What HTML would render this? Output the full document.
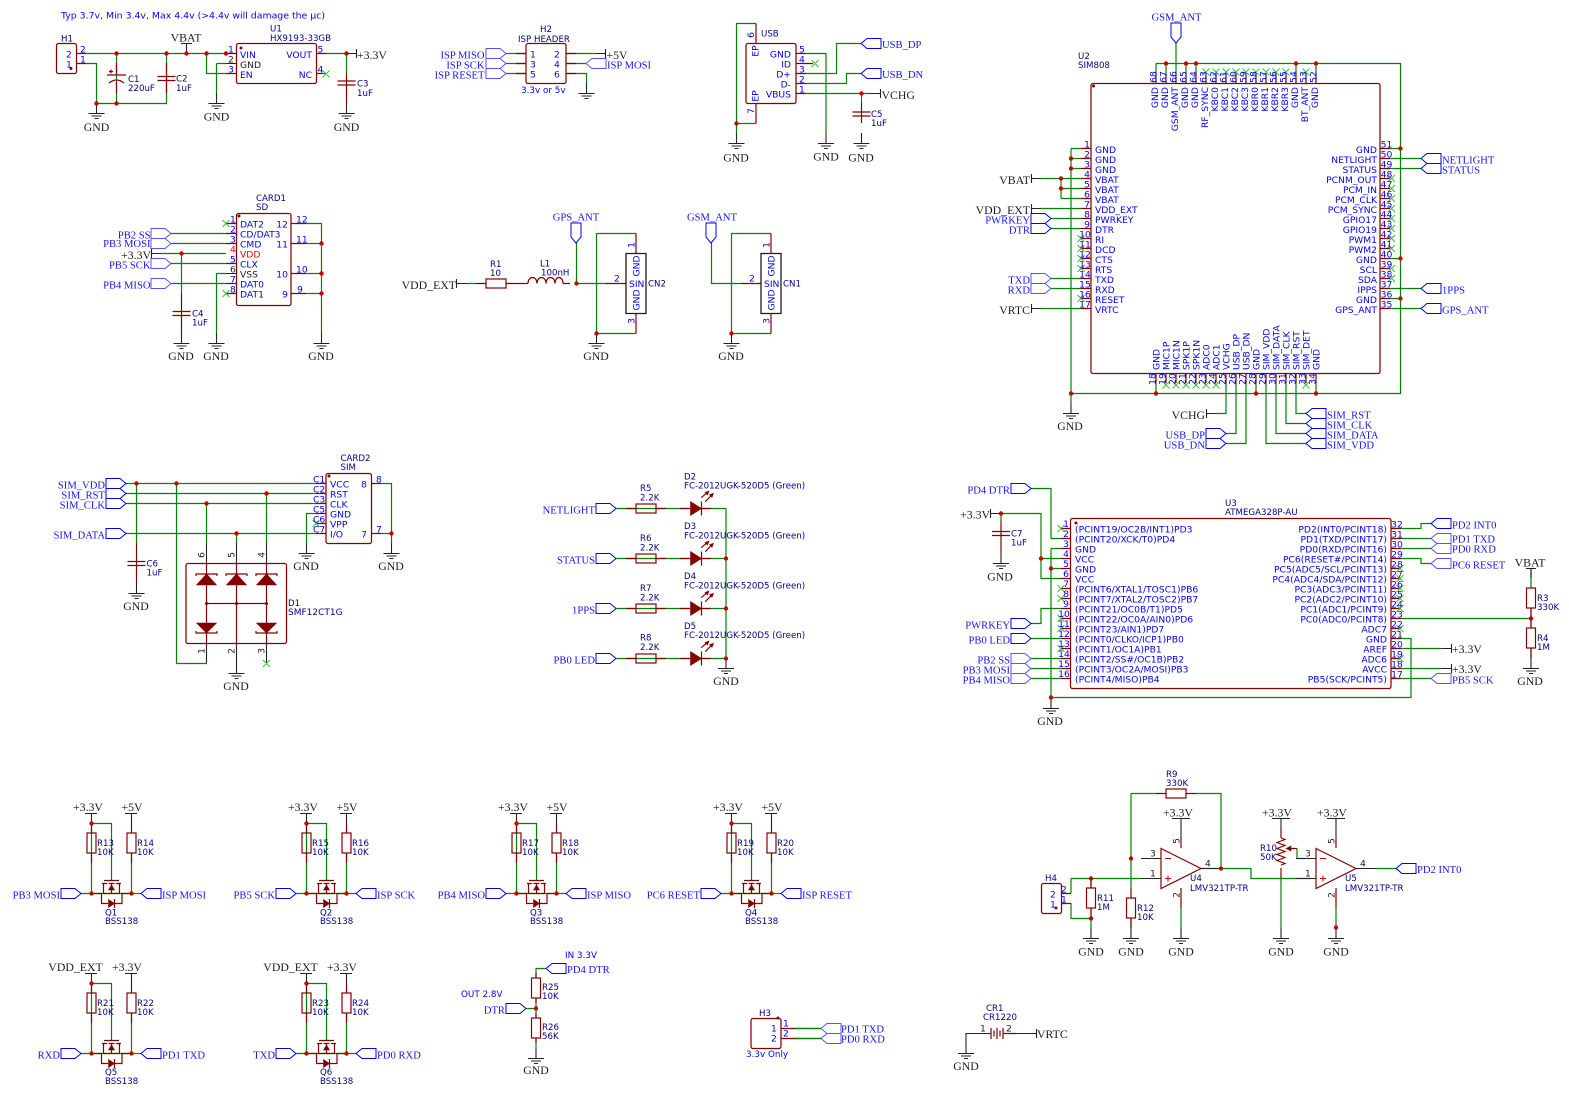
<!DOCTYPE html>
<html><head><meta charset="utf-8"><title>Schematic</title>
<style>
html,body{margin:0;padding:0;background:#fff;width:1569px;height:1097px;overflow:hidden}
svg{position:absolute;left:0;top:0}
text{font-family:"DejaVu Sans","Liberation Sans",sans-serif;font-size:9.2px;fill:#0000f0;dominant-baseline:central;stroke:none;transform:translateY(1.2px)}
.f{font-size:8.65px;fill:#000084}
.s text,text.s{font-family:"Liberation Serif",serif;font-size:11px}
.k text,text.k{fill:#1c1c1c}
.b text{fill:#1414f5}
.s.k text{font-size:11.8px}
.s.b text{font-size:10.6px}
.e{text-anchor:end}.e text{text-anchor:end}
.m{text-anchor:middle}.m text{text-anchor:middle}
path,rect,use{fill:none}
.w{stroke:#008400;stroke-width:1.2}
.p{stroke:#840000;stroke-width:1.2}
.g{stroke:#222;stroke-width:1.1}
.o{stroke:#840000;stroke-width:1.25}
.d{stroke:#c80000;stroke-width:4.4;stroke-linecap:round}
.dd{stroke:#840000;stroke-width:3;stroke-linecap:round}
.x{stroke:#30c030;stroke-width:.9}
.fl{fill:#fff;stroke:#0000f0;stroke-width:1}
.fp{fill:#fff3f3;stroke:#5a50ff;stroke-width:1}
.r{fill:#840000;stroke:#840000;stroke-width:.6}
.h{stroke:#1c1c1c;stroke-width:1.3;fill:#fff}
</style></head><body>
<svg width="1569" height="1097" viewBox="0 0 1569 1097" xmlns="http://www.w3.org/2000/svg">
<defs>
<g id="G"><path class="g" d="M0 0V10M-8 10.5H8M-5 13H5M-2 15.5H2"/></g>
<path id="R" d="M0 0L-6-5H-20V5H-6Z"/>
<path id="L" d="M0 0L6-5H20V5H6Z"/>
<path id="D" d="M0 0L-5-6V-20H5V-6Z"/>
<rect id="RH" class="p" x="0" y="-4.5" width="20" height="9"/>
<rect id="RV" class="p" x="-4.5" y="0" width="9" height="20"/>
<path id="C" class="p" d="M-9 0H9M-9 4H9"/>
<g id="LED"><path class="r" d="M0-7L11 0L0 7Z"/><path class="p" d="M11-7V7M10.7-10.8L17.7-16.8M14.7-6.8L22.3-14.5"/><path class="r" d="M18.5-17.5L14.5-16L17-13.5ZM23-15.2L19-13.7L21.5-11.2Z"/></g>
<g id="T"><path class="p" d="M0-20L40 0L0 20Z"/><path d="M4-10H10M4 10H10M7 7V13" stroke="#c80000"/></g>
<g id="S">
<path class="w" d="M81 893.5H141M91.5 823V893.5M131.5 853V893.5M91.5 823.5H111.5V880"/>
<path class="p" d="M91.5 823V833M91.5 853V863M131.5 823V833M131.5 853V863M91.5 893.5H101.5V903.5H108M114.5 903.5H122V893.5H131.5M103.5 893.5V883M119.5 893.5V883M111.5 893.5V883M103.5 893.5H119.5M104 880.5H119M102 883.5H107M108.5 883.5H114.5M116 883.5H121"/>
<path class="r" d="M108.5 899.5L114.5 903.5L108.5 907.5ZM111.5 885L108.5 890H114.5Z"/>
<path class="p" d="M114.5 899V908"/>
<path class="g" d="M91.5 813V823M131.5 813V823M85 813.5H97M125 813.5H137"/>
<use href="#RV" x="91.5" y="833"/><use href="#RV" x="131.5" y="833"/>
<use href="#R" class="fl" x="81" y="893.5"/><use href="#L" class="fl" x="141" y="893.5"/>
<path class="d" d="M91.5 823.5h0M91.5 893.5h0M131.5 893.5h0"/>
</g>
<g id="LU">
<path class="w" d="M616 508.5H690M701 508.5H726"/>
<path class="p" d="M626 508.5H636M656 508.5H666M680 508.5H690M701 508.5H711"/>
<use href="#RH" x="636" y="508.5"/>
<use href="#LED" x="690.5" y="508.5"/>
</g>
</defs>

<!-- wires -->
<path class="w" d="M86 53.5H226M86 63.5H96.5V103.5H166.5V53.5M116.5 53.5V103.5M206.5 53.5V73.5H226M216.5 63.5V93M216.5 63.5H226M326 53.5H346.5V73M326 73.5H323
M516 53.5H506M566 53.5H596M566 63.5H586M566 73.5H586.5V83M506 53.5H526M506 63.5H526M506 73.5H526
M736.5 23V133M736.5 23.5H756M736.5 123.5H756M806 53.5H826V133M806 73.5H836.5V43.5H861M806 83.5H846.5V73.5H861M806 93.5H870M861.5 93.5V103
M466 283.5H476M576 283.5H606M576.5 243V283.5M596.5 233V333M596.5 233.5H636M596.5 333.5H636
M711.5 243V283.5H741M731.5 233V333M731.5 233.5H771M731.5 333.5H771
M171 233.5H226M171 243.5H226M161 253.5H226M171 263.5H226M171 283.5H226M181.5 253.5V293M226 273.5H216.5V333M306 223.5H321.5V333M306 243.5H321.5M306 273.5H321.5M306 293.5H321.5
M126 483.5H316M126 493.5H316M126 503.5H316M126 533.5H316M136.5 483.5V543M176.5 483.5V663.5H206.5M206.5 503.5V543M236.5 533.5V543M266.5 493.5V543M316 513.5H306.5V543M381 483.5H391.5V543M381 533.5H391.5
M726 508.5V658
M1071 148.5V403M1071 148.5H1081M1071 158.5H1081M1071 168.5H1081M1041 178.5H1081M1061 178.5V198.5M1061 188.5H1081M1061 198.5H1081M1041 208.5H1081M1051 218.5H1081M1051 228.5H1081M1051 278.5H1081M1051 288.5H1081M1041 308.5H1081
M1156 63.5H1400.5V393.5H1071M1156 63.5V73M1166 63.5V73M1186 63.5V73M1196 63.5V73M1296 63.5V73M1316 63.5V73M1176 43V73
M1390 148.5H1400M1390 158.5H1421M1390 168.5H1421M1390 258.5H1400M1390 288.5H1421M1390 298.5H1400M1390 308.5H1421
M1156 383V393.5M1256 383V393.5M1316 383V393.5M1226 383V413.5H1216M1236 383V433.5H1226M1246 383V443.5H1226M1266 383V443.5H1306M1276 383V433.5H1306M1286 383V423.5H1306M1296 383V413.5H1306
M1031 488.5H1051V538.5H1061M1001 513.5H1041V578.5H1061M1041 558.5H1061M1051 548.5H1061M1051 548.5V698M1051 568.5H1061M1031 623.5H1041V608.5H1061M1031 638.5H1061M1031 658.5H1061M1031 668.5H1061M1031 678.5H1061M1051 697.5H1411V638.5H1401M1001 513.5V521
M1401 528.5H1421V523.5H1431M1401 538.5H1431M1401 548.5H1431M1401 558.5H1421V563.5H1431M1401 618.5H1531M1401 648.5H1441M1401 668.5H1441M1401 678.5H1431M1531 578V588M1531 608V628M1531 648V658
M1071 878.5H1141M1071 893V878.5M1071 903V918.5H1091M1091 878.5V888M1091 908V928M1131 793.5H1156M1196 793.5H1221V868.5M1131 793.5V888M1131 918V928M1201 868.5H1251V878.5H1311M1281 878V928M1181 908V928M1336 908V928M1376 868.5H1396M1297 848.5V858.5H1305"/>
<!-- pins -->
<path class="p" d="M76 53.5H86M76 63.5H86M226 53.5H236M226 73.5H236M316 53.5H326M316 73.5H323M116.5 63V75M116.5 82V93M166.5 63V93M346.5 73V103
M516 53.5H526M516 63.5H526M516 73.5H526M566 53.5H576M566 63.5H576M566 73.5H576
M756 23.5V43.5M756 103.5V123.5M796 53.5H806M796 63.5H813M796 73.5H806M796 83.5H806M796 93.5H806M861.5 103V123
M476 283.5H486M506 283.5H516M516 283.5H528M563 283.5H570M606 283.5H626M636 233.5V253M636 313.5V333.5
M741 283.5H761M771 233.5V253M771 313.5V333.5
M171 0M226 223.5H236M226 233.5H236M226 243.5H236M226 263.5H236M226 283.5H236M226 293.5H236M291 223.5H306M291 243.5H306M291 273.5H306M291 293.5H306M181.5 293V333
M316 483.5H326M316 493.5H326M316 503.5H326M316 513.5H326M316 523.5H326M316 533.5H326M371 483.5H381M371 533.5H381M136.5 543V583
M206.5 563V603.5M236.5 563V643M266.5 563V643M206.5 603.5V643M206.5 603.5H266.5
M1081 148.5h10m-10 10h10m-10 10h10m-10 10h10m-10 10h10m-10 10h10m-10 10h10m-10 10h10m-10 10h10m-10 10h10m-10 10h10m-10 10h10m-10 10h10m-10 10h10m-10 10h10m-10 10h10m-10 10h10
M1380 148.5h10m-10 10h10m-10 10h10m-10 10h10m-10 10h10m-10 10h10m-10 10h10m-10 10h10m-10 10h10m-10 10h10m-10 10h10m-10 10h10m-10 10h10m-10 10h10m-10 10h10m-10 10h10m-10 10h10
M1156 73v10m10-10v10m10-10v10m10-10v10m10-10v10m10-10v10m10-10v10m10-10v10m10-10v10m10-10v10m10-10v10m10-10v10m10-10v10m10-10v10m10-10v10m10-10v10m10-10v10
M1156 373v10m10-10v10m10-10v10m10-10v10m10-10v10m10-10v10m10-10v10m10-10v10m10-10v10m10-10v10m10-10v10m10-10v10m10-10v10m10-10v10m10-10v10m10-10v10m10-10v10
M1061 528.5h10m-10 10h10m-10 10h10m-10 10h10m-10 10h10m-10 10h10m-10 10h10m-10 10h10m-10 10h10m-10 10h10m-10 10h10m-10 10h10m-10 10h10m-10 10h10m-10 10h10m-10 10h10
M1391 528.5h10m-10 10h10m-10 10h10m-10 10h10m-10 10h10m-10 10h10m-10 10h10m-10 10h10m-10 10h10m-10 10h10m-10 10h10m-10 10h10m-10 10h10m-10 10h10m-10 10h10m-10 10h10
M1531 578V568M1531 608V618M1531 628V618M1531 648V658M1001 521V553
M1061 893.5H1071M1061 903.5H1071M1091 878.5V888M1091 908V918M1131 888V898M1131 918V928M1156 793.5H1166M1186 793.5H1196M1181 838V848M1181 888V908M1336 838V848M1336 888V908M1281 828V838M1281 868V878"/>
<!-- black stems -->
<path class="g" d="M186.5 53.5V43.5M181 43.5H192M226 63.5H236M346.5 53.5H356M356.5 49V58M596 53.5H606M605.5 49V58M881 93.5H870M880.5 89V98M456.5 283.5H466M456.5 279V288M486 283.5H476M506 283.5H516
M151 253.5H161M151.5 249V258M226 273.5H236M206.5 543V563M236.5 543V563M266.5 543V563M206.5 643V663.5M236.5 643V663M266.5 643V663M136.5 583V583
M1031 178.5H1041M1031.5 174V183M1031 208.5H1041M1031.5 204V213M1031 308.5H1041M1031.5 304V313M1216 413.5H1206M1206.5 409V418M991 513.5H1001M990.5 509V518M1451 648.5H1441M1451.5 644V653M1451 668.5H1441M1451.5 664V673M1531 568.5V578M1526 568.5H1536
M1141 858.5H1161M1141 878.5H1161M1201 868.5H1221M1181 818V838M1172 818.5H1190M1281 818V828M1272 818.5H1290M1336 818V838M1327 818.5H1345M1296 858.5H1316M1296 878.5H1316M1356 868.5H1376
M991 1033.5H966V1043M1036 1033.5H1016M1036.5 1029V1038"/>

<!-- bodies -->
<rect class="o" x="56.5" y="43.5" width="20" height="30" rx="2"/>
<rect class="o" x="236.5" y="43.5" width="80" height="40" rx="2"/>
<rect class="o" x="526" y="43.5" width="40" height="40" rx="2"/>
<rect class="o" x="746" y="43.5" width="50" height="60" rx="2"/>
<rect class="o" x="236.5" y="213.5" width="54.5" height="92" rx="2"/>
<rect class="o" x="326" y="473.5" width="45.5" height="70" rx="2"/>
<rect class="o" x="186" y="563.5" width="100.5" height="80" rx="2"/>
<rect class="o" x="1091" y="83.5" width="289" height="290" rx="2"/>
<rect class="o" x="1070.5" y="518.5" width="320.5" height="170" rx="2"/>
<rect class="o" x="1041.5" y="883.5" width="20" height="30" rx="2"/>
<rect class="o" x="751" y="1018.5" width="30" height="30" rx="2"/>
<path class="h" d="M626 253.5H646V313.5H626Z"/>
<path class="h" d="M761 253.5H781V313.5H761Z"/>

<!-- caps etc -->
<path class="p" d="M107 75H126M109 83Q116.5 77 124 83M109 71.5H113M111 69.5V73.5"/>
<use href="#C" x="166.5" y="76.5"/><use href="#C" x="346.5" y="81"/><use href="#C" x="861.5" y="112"/><use href="#C" x="181.5" y="311.5"/><use href="#C" x="136.5" y="561.5"/><use href="#C" x="1001" y="531.5"/>
<use href="#RH" x="486" y="283.5"/>
<path class="p" d="M528 283.5c0-8 9-8 9 0c0-8 9-8 9 0c0-8 9-8 9 0c0-8 8-8 8 0"/>
<use href="#RV" x="1531" y="588"/><use href="#RV" x="1531" y="628"/><use href="#RV" x="1091" y="888"/><use href="#RV" x="1131" y="898"/><use href="#RH" x="1166" y="793.5"/>
<use href="#T" x="1161" y="868.5"/><use href="#T" x="1316" y="868.5"/>
<path class="p" d="M1281 838l4 1.5-8 3 8 3-8 3 8 3-8 3 8 3-8 3 8 3-4 1.5M1297 848.5H1287"/>
<path class="r" d="M1286 848.5L1291 846V851Z"/>
<!-- battery -->
<path class="p" d="M991 1028V1039M994 1030.5V1036.5M997 1028V1039M1000 1030.5V1036.5M1003 1028V1039M1003 1033.5H1016"/>
<!-- D1 diodes -->
<path class="r" d="M206.5 574L196.5 585H216.5ZM236.5 574L226.5 585H246.5ZM266.5 574L256.5 585H276.5ZM206.5 633L196.5 623H216.5ZM266.5 633L256.5 623H276.5Z"/>
<path class="p" d="M196 576V574H217V576M226 576V574H247V576M256 576V574H277V576M196 631V633H217V631M256 631V633H277V631"/>
<path class="dd" d="M206.5 603.5h0M236.5 603.5h0M266.5 603.5h0M71 68.5h0M241 48h0M239 216h0M329 476h0M1093.5 86h0M1076 523h0M1056 908h0M778 1018h0"/>

<use href="#S"/><use href="#S" x="215"/><use href="#S" x="425"/><use href="#S" x="640"/><use href="#S" y="160"/><use href="#S" x="215" y="160"/>
<use href="#LU"/><use href="#LU" y="50"/><use href="#LU" y="100"/><use href="#LU" y="150"/>

<!-- flags -->
<g class="fp"><use class="fp" href="#R" x="506" y="53.5"/><use class="fp" href="#R" x="506" y="63.5"/><use class="fp" href="#R" x="506" y="73.5"/><use class="fp" href="#L" x="586" y="63.5"/>
<use class="fp" href="#R" x="171" y="233.5"/><use class="fp" href="#R" x="171" y="243.5"/><use class="fp" href="#R" x="171" y="263.5"/><use class="fp" href="#R" x="171" y="283.5"/>
<use class="fp" href="#R" x="1051" y="278.5"/><use class="fp" href="#R" x="1051" y="288.5"/>
<use class="fp" href="#R" x="1031" y="658.5"/><use class="fp" href="#R" x="1031" y="668.5"/><use class="fp" href="#R" x="1031" y="678.5"/>
<use class="fp" href="#L" x="1431" y="538.5"/><use class="fp" href="#L" x="1431" y="548.5"/><use class="fp" href="#L" x="1431" y="563.5"/><use class="fp" href="#L" x="1431" y="678.5"/>
<use class="fp" href="#L" x="821" y="1028.5"/><use class="fp" href="#L" x="821" y="1038.5"/></g>
<g class="fl">
<use class="fl" href="#L" x="861" y="43.5"/><use class="fl" href="#L" x="861" y="73.5"/><use class="fl" href="#D" x="576" y="243"/><use class="fl" href="#D" x="711" y="243"/><use class="fl" href="#D" x="1176" y="43"/>
<use class="fl" href="#R" x="126" y="483.5"/><use class="fl" href="#R" x="126" y="493.5"/><use class="fl" href="#R" x="126" y="503.5"/><use class="fl" href="#R" x="126" y="533.5"/>
<use class="fl" href="#R" x="616" y="508.5"/><use class="fl" href="#R" x="616" y="558.5"/><use class="fl" href="#R" x="616" y="608.5"/><use class="fl" href="#R" x="616" y="658.5"/>
<use class="fl" href="#R" x="1051" y="218.5"/><use class="fl" href="#R" x="1051" y="228.5"/>
<use class="fl" href="#L" x="1421" y="158.5"/><use class="fl" href="#L" x="1421" y="168.5"/><use class="fl" href="#L" x="1421" y="288.5"/><use class="fl" href="#L" x="1421" y="308.5"/>
<use class="fl" href="#R" x="1226" y="433.5"/><use class="fl" href="#R" x="1226" y="443.5"/>
<use class="fl" href="#L" x="1306" y="413.5"/><use class="fl" href="#L" x="1306" y="423.5"/><use class="fl" href="#L" x="1306" y="433.5"/><use class="fl" href="#L" x="1306" y="443.5"/>
<use class="fl" href="#R" x="1031" y="488.5"/><use class="fl" href="#R" x="1031" y="623.5"/><use class="fl" href="#R" x="1031" y="638.5"/>
<use class="fl" href="#L" x="1431" y="523.5"/>
<use class="fl" href="#L" x="1396" y="868.5"/>
<use class="fl" href="#L" x="546" y="968.5"/><use class="fl" href="#R" x="526" y="1008.5"/>
</g>
<path class="w" d="M536 968.5H546M526 1008.5H536M536 968V978M536 998V1018M536 1038V1048"/>
<path class="p" d="M536 973V978M536 998V1003M536 1013V1018M536 1038V1043"/>
<use href="#RV" x="536" y="978"/><use href="#RV" x="536" y="1018"/>
<path class="w" d="M791 1028.5H801M791 1038.5H801"/><path class="p" d="M781 1028.5H821M781 1038.5H821"/>
<path class="w" d="M795 1028.5H821M795 1038.5H821"/>

<!-- GND symbols -->
<use href="#G" x="96.5" y="103"/><use href="#G" x="216.5" y="93"/><use href="#G" x="346.5" y="103"/><use href="#G" x="586.5" y="83"/>
<use href="#G" x="736.5" y="133"/><use href="#G" x="826" y="133"/><use href="#G" x="861.5" y="133"/>
<use href="#G" x="596.5" y="333"/><use href="#G" x="731.5" y="333"/><use href="#G" x="181.5" y="333"/><use href="#G" x="216.5" y="333"/><use href="#G" x="321.5" y="333"/>
<use href="#G" x="306.5" y="543"/><use href="#G" x="391.5" y="543"/><use href="#G" x="136.5" y="583"/><use href="#G" x="236.5" y="663"/>
<use href="#G" x="726" y="658"/><use href="#G" x="1071" y="403"/><use href="#G" x="1001" y="553"/><use href="#G" x="1051" y="698"/><use href="#G" x="1531" y="658"/>
<use href="#G" x="1091" y="928"/><use href="#G" x="1131" y="928"/><use href="#G" x="1181" y="928"/><use href="#G" x="1281" y="928"/><use href="#G" x="1336" y="928"/>
<use href="#G" x="536" y="1048"/><use href="#G" x="966" y="1043"/>

<!-- junctions -->
<path class="d" d="M96.5 103.5h0M116.5 103.5h0M116.5 53.5h0M166.5 53.5h0M186.5 53.5h0M206.5 53.5h0M226 53.5h0M346.5 53.5h0M736.5 123.5h0M861.5 93.5h0M576.5 283.5h0M596.5 333.5h0M731.5 333.5h0M181.5 253.5h0M321.5 243.5h0M321.5 273.5h0M321.5 293.5h0
M136.5 483.5h0M176.5 483.5h0M266.5 493.5h0M206.5 503.5h0M236.5 533.5h0M391.5 533.5h0M726 558.5h0M726 608.5h0M726 658.5h0
M1071 158.5h0M1071 168.5h0M1061 178.5h0M1061 188.5h0M1166 63.5h0M1186 63.5h0M1196 63.5h0M1296 63.5h0M1316 63.5h0M1400.5 148.5h0M1400.5 258.5h0M1400.5 298.5h0M1071 393.5h0M1156 393.5h0M1256 393.5h0M1316 393.5h0
M1001 513.5h0M1041 558.5h0M1051 568.5h0M1051 697.5h0M1531 618.5h0M1091 878.5h0M1091 918.5h0M1131 858.5h0M1221 868.5h0M1336 927.5h0M536 1008.5h0"/>

<!-- no-connect -->
<path class="x" d="M322.5 70.5l7 7m0-7l-7 7M811.5 60l7 7m0-7l-7 7M222.5 220l7 7m0-7l-7 7M222.5 290l7 7m0-7l-7 7M312.5 520l7 7m0-7l-7 7M263 660l7 7m0-7l-7 7
M1202.5 68.5l7 7m0-7l-7 7m10-7l7 7m0-7l-7 7m10-7l7 7m0-7l-7 7m10-7l7 7m0-7l-7 7m10-7l7 7m0-7l-7 7m10-7l7 7m0-7l-7 7m10-7l7 7m0-7l-7 7m10-7l7 7m0-7l-7 7m10-7l7 7m0-7l-7 7M1302.5 68.5l7 7m0-7l-7 7
M1162.5 381.5l7 7m0-7l-7 7m10-7l7 7m0-7l-7 7m10-7l7 7m0-7l-7 7m10-7l7 7m0-7l-7 7m10-7l7 7m0-7l-7 7m10-7l7 7m0-7l-7 7M1302.5 381.5l7 7m0-7l-7 7
M1077.5 235l7 7m0-7l-7 7m0 3l7 7m0-7l-7 7m0 3l7 7m0-7l-7 7m0 3l7 7m0-7l-7 7M1077.5 295l7 7m0-7l-7 7
M1388 175l7 7m0-7l-7 7m0 3l7 7m0-7l-7 7m0 3l7 7m0-7l-7 7m0 3l7 7m0-7l-7 7m0 3l7 7m0-7l-7 7m0 3l7 7m0-7l-7 7m0 3l7 7m0-7l-7 7m0 3l7 7m0-7l-7 7M1388 265l7 7m0-7l-7 7m0 3l7 7m0-7l-7 7
M1057.5 525l7 7m0-7l-7 7M1057.5 585l7 7m0-7l-7 7m0 3l7 7m0-7l-7 7M1057.5 615l7 7m0-7l-7 7m0 3l7 7m0-7l-7 7M1057.5 645l7 7m0-7l-7 7
M1396.5 565l7 7m0-7l-7 7m0 3l7 7m0-7l-7 7m0 3l7 7m0-7l-7 7m0 3l7 7m0-7l-7 7m0 3l7 7m0-7l-7 7M1396.5 625l7 7m0-7l-7 7M1396.5 655l7 7m0-7l-7 7"/>

<!-- ===== TEXT ===== -->
<text x="61" y="15.5" textLength="264" lengthAdjust="spacingAndGlyphs" style="font-size:8.8px">Typ 3.7v, Min 3.4v, Max 4.4v (&gt;4.4v will damage the µc)</text>

<!-- GND + power net labels (black serif) -->
<g class="s k m">
<text x="96.5" y="126">GND</text><text x="216.5" y="115.5">GND</text><text x="346.5" y="126">GND</text>
<text x="736" y="156.5">GND</text><text x="826" y="155.5">GND</text><text x="861" y="156.5">GND</text>
<text x="596" y="355">GND</text><text x="731" y="355">GND</text><text x="181" y="355">GND</text><text x="216" y="355">GND</text><text x="321" y="355">GND</text>
<text x="306" y="565">GND</text><text x="391" y="565">GND</text><text x="136" y="605">GND</text><text x="236" y="685">GND</text><text x="726" y="680">GND</text>
<text x="1070" y="425">GND</text><text x="1000" y="575.5">GND</text><text x="1050" y="720">GND</text><text x="1530" y="680">GND</text>
<text x="1091" y="950.5">GND</text><text x="1131" y="950.5">GND</text><text x="1181" y="950.5">GND</text><text x="1281" y="950.5">GND</text><text x="1336" y="950.5">GND</text>
<text x="536" y="1069">GND</text><text x="966" y="1065">GND</text>
<text x="186" y="36.5">VBAT</text><text x="1530" y="561.5">VBAT</text>
<text x="88" y="805.7">+3.3V</text><text x="132" y="805.7">+5V</text><text x="303" y="805.7">+3.3V</text><text x="347" y="805.7">+5V</text><text x="513" y="805.7">+3.3V</text><text x="557" y="805.7">+5V</text><text x="728" y="805.7">+3.3V</text><text x="772" y="805.7">+5V</text>
<text x="75.5" y="965.7">VDD_EXT</text><text x="127" y="965.7">+3.3V</text><text x="290.5" y="965.7">VDD_EXT</text><text x="342" y="965.7">+3.3V</text>
<text x="1178" y="811.5">+3.3V</text><text x="1277" y="811.5">+3.3V</text><text x="1332" y="811.5">+3.3V</text>
</g>
<g class="s k">
<text x="357" y="54">+3.3V</text><text x="606.5" y="54">+5V</text><text x="881.5" y="94">VCHG</text><text x="1452" y="648">+3.3V</text><text x="1452" y="668">+3.3V</text><text x="1037" y="1033">VRTC</text>
</g>
<g class="s k e">
<text x="456" y="284">VDD_EXT</text><text x="151" y="254">+3.3V</text><text x="1030" y="179">VBAT</text><text x="1030" y="209">VDD_EXT</text><text x="1030" y="309">VRTC</text><text x="1205" y="414">VCHG</text><text x="990" y="513.5">+3.3V</text>
</g>

<!-- blue serif labels, right-aligned -->
<g class="s b e">
<text x="484.5" y="55">ISP MISO</text><text x="484.5" y="65">ISP SCK</text><text x="484.5" y="75">ISP RESET</text>
<text x="150.5" y="235">PB2 SS</text><text x="150.5" y="243.5">PB3 MOSI</text><text x="150.5" y="265">PB5 SCK</text><text x="150.5" y="285">PB4 MISO</text>
<text x="105" y="485">SIM_VDD</text><text x="105" y="495">SIM_RST</text><text x="105" y="505">SIM_CLK</text><text x="105" y="535">SIM_DATA</text>
<text x="595" y="510">NETLIGHT</text><text x="595" y="560">STATUS</text><text x="595" y="610">1PPS</text><text x="595" y="660">PB0 LED</text>
<text x="1030" y="220">PWRKEY</text><text x="1030" y="230">DTR</text><text x="1030" y="280">TXD</text><text x="1030" y="290">RXD</text>
<text x="1205" y="435">USB_DP</text><text x="1205" y="445">USB_DN</text>
<text x="1010" y="490">PD4 DTR</text><text x="1010" y="625">PWRKEY</text><text x="1010" y="640">PB0 LED</text><text x="1010" y="660">PB2 SS</text><text x="1010" y="670">PB3 MOSI</text><text x="1010" y="680">PB4 MISO</text>
<text x="60" y="895">PB3 MOSI</text><text x="275" y="895">PB5 SCK</text><text x="485" y="895">PB4 MISO</text><text x="700" y="895">PC6 RESET</text>
<text x="60" y="1055">RXD</text><text x="275" y="1055">TXD</text><text x="505" y="1010">DTR</text>
</g>
<g class="s b">
<text x="607" y="65">ISP MOSI</text><text x="882" y="44.5">USB_DP</text><text x="882" y="74.5">USB_DN</text>
<text x="1442" y="160">NETLIGHT</text><text x="1442" y="170">STATUS</text><text x="1442" y="290">1PPS</text><text x="1442" y="310">GPS_ANT</text>
<text x="1327" y="415">SIM_RST</text><text x="1327" y="425">SIM_CLK</text><text x="1327" y="435">SIM_DATA</text><text x="1327" y="445">SIM_VDD</text>
<text x="1452" y="525">PD2 INT0</text><text x="1452" y="539">PD1 TXD</text><text x="1452" y="549">PD0 RXD</text><text x="1452" y="565">PC6 RESET</text><text x="1452" y="680">PB5 SCK</text>
<text x="162" y="895">ISP MOSI</text><text x="377" y="895">ISP SCK</text><text x="587" y="895">ISP MISO</text><text x="802" y="895">ISP RESET</text>
<text x="162" y="1055">PD1 TXD</text><text x="377" y="1055">PD0 RXD</text><text x="1417" y="869.5">PD2 INT0</text><text x="567" y="969.5">PD4 DTR</text><text x="841" y="1029">PD1 TXD</text><text x="841" y="1039">PD0 RXD</text>
</g>
<g class="s b m"><text x="576" y="217">GPS_ANT</text><text x="712" y="217">GSM_ANT</text><text x="1176.5" y="17">GSM_ANT</text></g>

<!-- reference designators -->
<g class="f">
<text class="f" x="61" y="38.5">H1</text><text class="f" x="128" y="79">C1</text><text class="f" x="128" y="88">220uF</text><text class="f" x="176" y="78.5">C2</text><text class="f" x="176" y="88">1uF</text>
<text class="f" x="270" y="28.5">U1</text><text class="f" x="270" y="38">HX9193-33GB</text><text class="f" x="357" y="83.5">C3</text><text class="f" x="357" y="93">1uF</text>
<text class="f" x="540" y="29">H2</text><text class="f" x="518" y="39">ISP HEADER</text>
<text class="f" x="761" y="33.5">USB</text><text class="f" x="871" y="114">C5</text><text class="f" x="871" y="123">1uF</text>
<text class="f" x="490" y="264">R1</text><text class="f" x="490" y="273">10</text><text class="f" x="540" y="263.5">L1</text><text class="f" x="541" y="272.5">100nH</text><text class="f" x="648" y="283.5">CN2</text><text class="f" x="783" y="283.5">CN1</text>
<text class="f" x="256" y="198">CARD1</text><text class="f" x="256" y="207">SD</text><text class="f" x="192" y="313.5">C4</text><text class="f" x="192" y="322.5">1uF</text>
<text class="f" x="340.5" y="458">CARD2</text><text class="f" x="340.5" y="467">SIM</text><text class="f" x="146.5" y="563.5">C6</text><text class="f" x="146.5" y="572.5">1uF</text><text class="f" x="288" y="603">D1</text><text class="f" x="288" y="612" style="font-size:9px">SMF12CT1G</text>
<text class="f" x="640" y="488">R5</text><text class="f" x="640" y="497.5">2.2K</text><text class="f" x="640" y="538">R6</text><text class="f" x="640" y="547.5">2.2K</text><text class="f" x="640" y="588">R7</text><text class="f" x="640" y="597.5">2.2K</text><text class="f" x="640" y="637.5">R8</text><text class="f" x="640" y="647">2.2K</text>
<text class="f" x="684" y="476.5">D2</text><text class="f" x="684" y="485.5">FC-2012UGK-520D5 (Green)</text><text class="f" x="684" y="526">D3</text><text class="f" x="684" y="535.5">FC-2012UGK-520D5 (Green)</text><text class="f" x="684" y="576">D4</text><text class="f" x="684" y="585.5">FC-2012UGK-520D5 (Green)</text><text class="f" x="684" y="626">D5</text><text class="f" x="684" y="635">FC-2012UGK-520D5 (Green)</text>
<text class="f" x="1078" y="56">U2</text><text class="f" x="1078" y="65">SIM808</text>
<text class="f" x="1225" y="503">U3</text><text class="f" x="1225" y="512">ATMEGA328P-AU</text><text class="f" x="1011" y="533.5">C7</text><text class="f" x="1011" y="542.5">1uF</text>
<text class="f" x="1537" y="598">R3</text><text class="f" x="1537" y="607">330K</text><text class="f" x="1537" y="638">R4</text><text class="f" x="1537" y="647">1M</text>
<text class="f" x="97" y="843">R13</text><text class="f" x="97" y="852">10K</text><text class="f" x="137" y="843">R14</text><text class="f" x="137" y="852">10K</text><text class="f" x="105" y="912.5">Q1</text><text class="f" x="105" y="921">BSS138</text>
<text class="f" x="312" y="843">R15</text><text class="f" x="312" y="852">10K</text><text class="f" x="352" y="843">R16</text><text class="f" x="352" y="852">10K</text><text class="f" x="320" y="912.5">Q2</text><text class="f" x="320" y="921">BSS138</text>
<text class="f" x="522" y="843">R17</text><text class="f" x="522" y="852">10K</text><text class="f" x="562" y="843">R18</text><text class="f" x="562" y="852">10K</text><text class="f" x="530" y="912.5">Q3</text><text class="f" x="530" y="921">BSS138</text>
<text class="f" x="737" y="843">R19</text><text class="f" x="737" y="852">10K</text><text class="f" x="777" y="843">R20</text><text class="f" x="777" y="852">10K</text><text class="f" x="745" y="912.5">Q4</text><text class="f" x="745" y="921">BSS138</text>
<text class="f" x="97" y="1003">R21</text><text class="f" x="97" y="1012">10K</text><text class="f" x="137" y="1003">R22</text><text class="f" x="137" y="1012">10K</text><text class="f" x="105" y="1072">Q5</text><text class="f" x="105" y="1081">BSS138</text>
<text class="f" x="312" y="1003">R23</text><text class="f" x="312" y="1012">10K</text><text class="f" x="352" y="1003">R24</text><text class="f" x="352" y="1012">10K</text><text class="f" x="320" y="1072">Q6</text><text class="f" x="320" y="1081">BSS138</text>
<text class="f" x="542" y="987">R25</text><text class="f" x="542" y="996">10K</text><text class="f" x="542" y="1027">R26</text><text class="f" x="542" y="1036">56K</text>
<text class="f" x="759" y="1013">H3</text><text class="f" x="986" y="1008">CR1</text><text class="f" x="983" y="1017">CR1220</text>
<text class="f" x="1045" y="878">H4</text><text class="f" x="1097" y="898">R11</text><text class="f" x="1097" y="907">1M</text><text class="f" x="1137" y="908">R12</text><text class="f" x="1137" y="917">10K</text><text class="f" x="1166" y="774">R9</text><text class="f" x="1166" y="783">330K</text>
<text class="f" x="1190" y="878">U4</text><text class="f" x="1190" y="888">LMV321TP-TR</text><text class="f" x="1345" y="878">U5</text><text class="f" x="1345" y="888">LMV321TP-TR</text>
<text class="f" x="1260" y="848">R10</text><text class="f" x="1260" y="857">50K</text>
</g>
<text x="521" y="90" style="font-size:8.8px">3.3v or 5v</text>
<text x="565" y="955" style="font-size:8.8px">IN 3.3V</text><text x="461" y="994" style="font-size:8.8px">OUT 2.8V</text><text x="746" y="1054" style="font-size:8.8px">3.3v Only</text>

<!-- small parts pin names & numbers -->
<g>
<text x="240" y="54.5">VIN</text><text x="240" y="64.5" style="fill:#1c1c1c">GND</text><text x="240" y="74.5">EN</text>
<text x="80" y="49">2</text><text x="80" y="59">1</text><text x="66" y="54">2</text><text x="66" y="64">1</text>
<text x="228" y="49">1</text><text x="228" y="69">3</text><text x="228" y="59" style="fill:#1c1c1c">2</text><text x="317.5" y="49">5</text><text x="317.5" y="69">4</text>
<text x="530" y="54">1</text><text x="530" y="64">3</text><text x="530" y="74">5</text><text x="554" y="54">2</text><text x="554" y="64">4</text><text x="554" y="74">6</text>
<text x="799" y="49">5</text><text x="799" y="59">4</text><text x="799" y="69">3</text><text x="799" y="79">2</text><text x="799" y="89">1</text>
<text x="614" y="278">2</text><text x="749" y="278">2</text><text x="629" y="283.5">SIN</text><text x="764" y="283.5">SIN</text>
<text x="240" y="224">DAT2</text><text x="240" y="234">CD/DAT3</text><text x="240" y="244">CMD</text><text x="240" y="254" style="fill:#f00000">VDD</text><text x="240" y="264">CLX</text><text x="240" y="274" style="fill:#1c1c1c">VSS</text><text x="240" y="284">DAT0</text><text x="240" y="294">DAT1</text>
<text x="230" y="219">1</text><text x="230" y="229">2</text><text x="230" y="239">3</text><text x="230" y="249" style="fill:#f00000">4</text><text x="230" y="259">5</text><text x="230" y="269" style="fill:#1c1c1c">6</text><text x="230" y="279">7</text><text x="230" y="289">8</text>
<text x="296" y="219">12</text><text x="296" y="239">11</text><text x="296" y="269">10</text><text x="297" y="289">9</text>
<text x="330" y="484">VCC</text><text x="330" y="494">RST</text><text x="330" y="504">CLK</text><text x="330" y="514">GND</text><text x="330" y="524">VPP</text><text x="330" y="534">I/O</text>
<text x="313" y="479">C1</text><text x="313" y="489">C2</text><text x="313" y="499">C3</text><text x="313" y="509">C5</text><text x="313" y="519">C6</text><text x="313" y="529">C7</text><text x="376" y="479">8</text><text x="376" y="529">7</text>
<text x="1061" y="889">2</text><text x="1061" y="899">1</text><text x="1050" y="894">2</text><text x="1050" y="904">1</text>
<text x="771" y="1028">1</text><text x="771" y="1038">2</text><text x="783" y="1023">1</text><text x="783" y="1033">2</text>
<text x="980" y="1028" style="fill:#1c1c1c">1</text><text x="1006" y="1028" style="fill:#1c1c1c">2</text>
</g>
<g class="e">
<text x="312" y="54.5">VOUT</text><text x="312" y="74.5">NC</text>
<text x="791" y="54">GND</text><text x="791" y="64">ID</text><text x="791" y="74">D+</text><text x="791" y="84">D-</text><text x="791" y="94">VBUS</text>
<text x="288" y="224">12</text><text x="288" y="244">11</text><text x="288" y="274">10</text><text x="288" y="294">9</text><text x="367" y="484">8</text><text x="367" y="534">7</text>
</g>
<g class="k">
<text x="1150" y="853">3</text><text x="1150" y="873">1</text><text x="1205" y="863">4</text><text x="1305" y="853">3</text><text x="1305" y="873">1</text><text x="1360" y="863">4</text>
</g>

<!-- SIM808 left -->
<g>
<text x="1095" y="149.5">GND</text><text x="1095" y="159.5">GND</text><text x="1095" y="169.5">GND</text><text x="1095" y="179.5">VBAT</text><text x="1095" y="189.5">VBAT</text><text x="1095" y="199.5">VBAT</text><text x="1095" y="209.5">VDD_EXT</text><text x="1095" y="219.5">PWRKEY</text><text x="1095" y="229.5">DTR</text><text x="1095" y="239.5">RI</text><text x="1095" y="249.5">DCD</text><text x="1095" y="259.5">CTS</text><text x="1095" y="269.5">RTS</text><text x="1095" y="279.5">TXD</text><text x="1095" y="289.5">RXD</text><text x="1095" y="299.5">RESET</text><text x="1095" y="309.5">VRTC</text>
</g>
<g class="m">
<text x="1087" y="144">1</text><text x="1087" y="154">2</text><text x="1087" y="164">3</text><text x="1087" y="174">4</text><text x="1087" y="184">5</text><text x="1087" y="194">6</text><text x="1087" y="204">7</text><text x="1087" y="214">8</text><text x="1087" y="224">9</text><text x="1085" y="234">10</text><text x="1085" y="244">11</text><text x="1085" y="254">12</text><text x="1085" y="264">13</text><text x="1085" y="274">14</text><text x="1085" y="284">15</text><text x="1085" y="294">16</text><text x="1085" y="304">17</text>
<!-- right numbers -->
<text x="1386.5" y="144">51</text><text x="1386.5" y="154">50</text><text x="1386.5" y="164">49</text><text x="1386.5" y="174">48</text><text x="1386.5" y="184">47</text><text x="1386.5" y="194">46</text><text x="1386.5" y="204">45</text><text x="1386.5" y="214">44</text><text x="1386.5" y="224">43</text><text x="1386.5" y="234">42</text><text x="1386.5" y="244">41</text><text x="1386.5" y="254">40</text><text x="1386.5" y="264">39</text><text x="1386.5" y="274">38</text><text x="1386.5" y="284">37</text><text x="1386.5" y="294">36</text><text x="1386.5" y="304">35</text>
<!-- U3 numbers -->
<text x="1066" y="523.5">1</text><text x="1066" y="533.5">2</text><text x="1066" y="543.5">3</text><text x="1066" y="553.5">4</text><text x="1066" y="563.5">5</text><text x="1066" y="573.5">6</text><text x="1066" y="583.5">7</text><text x="1066" y="593.5">8</text><text x="1066" y="603.5">9</text><text x="1064" y="613.5">10</text><text x="1064" y="623.5">11</text><text x="1064" y="633.5">12</text><text x="1064" y="643.5">13</text><text x="1064" y="653.5">14</text><text x="1064" y="663.5">15</text><text x="1064" y="673.5">16</text>
<text x="1397" y="524">32</text><text x="1397" y="534">31</text><text x="1397" y="544">30</text><text x="1397" y="554">29</text><text x="1397" y="564">28</text><text x="1397" y="574">27</text><text x="1397" y="584">26</text><text x="1397" y="594">25</text><text x="1397" y="604">24</text><text x="1397" y="614">23</text><text x="1397" y="624">22</text><text x="1397" y="634">21</text><text x="1397" y="644">20</text><text x="1397" y="654">19</text><text x="1397" y="664">18</text><text x="1397" y="674">17</text>
</g>
<g class="e">
<text x="1377" y="149.5">GND</text><text x="1377" y="159.5">NETLIGHT</text><text x="1377" y="169.5">STATUS</text><text x="1377" y="179.5">PCNM_OUT</text><text x="1377" y="189.5">PCM_IN</text><text x="1377" y="199.5">PCM_CLK</text><text x="1377" y="209.5">PCM_SYNC</text><text x="1377" y="219.5">GPIO17</text><text x="1377" y="229.5">GPIO19</text><text x="1377" y="239.5">PWM1</text><text x="1377" y="249.5">PWM2</text><text x="1377" y="259.5">GND</text><text x="1377" y="269.5">SCL</text><text x="1377" y="279.5">SDA</text><text x="1377" y="289.5">IPPS</text><text x="1377" y="299.5">GND</text><text x="1377" y="309.5">GPS_ANT</text>
<text x="1387" y="529">PD2(INT0/PCINT18)</text><text x="1387" y="539">PD1(TXD/PCINT17)</text><text x="1387" y="549">PD0(RXD/PCINT16)</text><text x="1387" y="559">PC6(RESET#/PCINT14)</text><text x="1387" y="569">PC5(ADC5/SCL/PCINT13)</text><text x="1387" y="579">PC4(ADC4/SDA/PCINT12)</text><text x="1387" y="589">PC3(ADC3/PCINT11)</text><text x="1387" y="599">PC2(ADC2/PCINT10)</text><text x="1387" y="609">PC1(ADC1/PCINT9)</text><text x="1387" y="619">PC0(ADC0/PCINT8)</text><text x="1387" y="629">ADC7</text><text x="1387" y="639">GND</text><text x="1387" y="649">AREF</text><text x="1387" y="659">ADC6</text><text x="1387" y="669">AVCC</text><text x="1387" y="679">PB5(SCK/PCINT5)</text>
</g>
<g>
<text x="1075" y="529">(PCINT19/OC2B/INT1)PD3</text><text x="1075" y="539">(PCINT20/XCK/T0)PD4</text><text x="1075" y="549">GND</text><text x="1075" y="559">VCC</text><text x="1075" y="569">GND</text><text x="1075" y="579">VCC</text><text x="1075" y="589">(PCINT6/XTAL1/TOSC1)PB6</text><text x="1075" y="599">(PCINT7/XTAL2/TOSC2)PB7</text><text x="1075" y="609">(PCINT21/OC0B/T1)PD5</text><text x="1075" y="619">(PCINT22/OC0A/AIN0)PD6</text><text x="1075" y="629">(PCINT23/AIN1)PD7</text><text x="1075" y="639">(PCINT0/CLKO/ICP1)PB0</text><text x="1075" y="649">(PCINT1/OC1A)PB1</text><text x="1075" y="659">(PCINT2/SS#/OC1B)PB2</text><text x="1075" y="669">(PCINT3/OC2A/MOSI)PB3</text><text x="1075" y="679">(PCINT4/MISO)PB4</text>
</g>

<!-- rotated text: x=-Y, y=X -->
<g transform="rotate(-90)">
<g class="e">
<text x="-87" y="1154.5">GND</text><text x="-87" y="1164.5">GND</text><text x="-87" y="1174.5">GSM_ANT</text><text x="-87" y="1184.5">GND</text><text x="-87" y="1194.5">GND</text><text x="-87" y="1204.5">RF_SYNC</text><text x="-87" y="1214.5">KBC0</text><text x="-87" y="1224.5">KBC1</text><text x="-87" y="1234.5">KBC2</text><text x="-87" y="1244.5">KBC3</text><text x="-87" y="1254.5">KBR0</text><text x="-87" y="1264.5">KBR1</text><text x="-87" y="1274.5">KBR2</text><text x="-87" y="1284.5">KBR3</text><text x="-87" y="1294.5">GND</text><text x="-87" y="1304.5">BT_ANT</text><text x="-87" y="1314.5">GND</text>
</g>
<g class="m">
<text x="-77" y="1153">68</text><text x="-77" y="1163">67</text><text x="-77" y="1173">66</text><text x="-77" y="1183">65</text><text x="-77" y="1193">64</text><text x="-77" y="1203">63</text><text x="-77" y="1213">62</text><text x="-77" y="1223">61</text><text x="-77" y="1233">60</text><text x="-77" y="1243">59</text><text x="-77" y="1253">58</text><text x="-77" y="1263">57</text><text x="-77" y="1273">56</text><text x="-77" y="1283">55</text><text x="-77" y="1293">54</text><text x="-77" y="1303">53</text><text x="-77" y="1313">52</text>
<text x="-379" y="1152">18</text><text x="-379" y="1162">19</text><text x="-379" y="1172">20</text><text x="-379" y="1182">21</text><text x="-379" y="1192">22</text><text x="-379" y="1202">23</text><text x="-379" y="1212">24</text><text x="-379" y="1222">25</text><text x="-379" y="1232">26</text><text x="-379" y="1242">27</text><text x="-379" y="1252">28</text><text x="-379" y="1262">29</text><text x="-379" y="1272">30</text><text x="-379" y="1282">31</text><text x="-379" y="1292">32</text><text x="-379" y="1302">33</text><text x="-379" y="1312">34</text>
<text x="-51" y="755">EP</text><text x="-96" y="755">EP</text><text x="-35" y="750.5">6</text><text x="-111" y="750.5">7</text>
<text x="-266" y="636">GND</text><text x="-300" y="636">GND</text><text x="-245" y="631">1</text><text x="-321" y="631">3</text>
<text x="-266" y="771">GND</text><text x="-300" y="771">GND</text><text x="-245" y="766">1</text><text x="-321" y="766">3</text>
</g>
<g class="m k">
<text x="-555" y="201">6</text><text x="-555" y="231">5</text><text x="-555" y="261">4</text><text x="-651" y="201">1</text><text x="-651" y="231">2</text><text x="-651" y="261">3</text>
<text x="-841" y="1176">5</text><text x="-895" y="1176">2</text><text x="-841" y="1331">5</text><text x="-895" y="1331">2</text>
</g>
<text x="-370" y="1156">GND</text><text x="-370" y="1166">MIC1P</text><text x="-370" y="1176">MIC1N</text><text x="-370" y="1186">SPK1P</text><text x="-370" y="1196">SPK1N</text><text x="-370" y="1206">ADC0</text><text x="-370" y="1216">ADC1</text><text x="-370" y="1226">VCHG</text><text x="-370" y="1236">USB_DP</text><text x="-370" y="1246">USB_DN</text><text x="-370" y="1256">GND</text><text x="-370" y="1266">SIM_VDD</text><text x="-370" y="1276">SIM_DATA</text><text x="-370" y="1286">SIM_CLK</text><text x="-370" y="1296">SIM_RST</text><text x="-370" y="1306">SIM_DET</text><text x="-370" y="1316">GND</text>
</g>
</svg>
</body></html>
